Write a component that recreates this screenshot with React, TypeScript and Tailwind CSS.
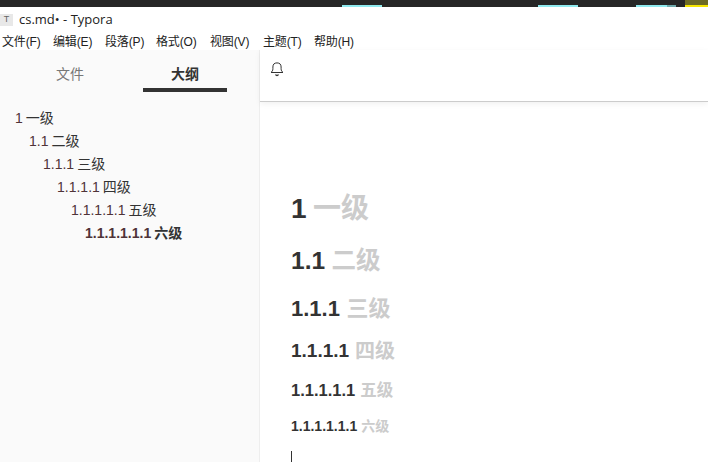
import React from "react";

const sans = "font-['Liberation_Sans','Noto_Sans_CJK_SC',sans-serif]";

const menus = [
  { label: "文件(F)", cls: "w-[51px]" },
  { label: "编辑(E)", cls: "w-[52px]" },
  { label: "段落(P)", cls: "w-[51px]" },
  { label: "格式(O)", cls: "w-[54px]" },
  { label: "视图(V)", cls: "w-[53px]" },
  { label: "主题(T)", cls: "w-[51px]" },
  { label: "帮助(H)", cls: "w-[60px]" },
];

const outline = [
  { num: "1", text: "一级", cls: "pl-[15px]" },
  { num: "1.1", text: "二级", cls: "pl-[29px]" },
  { num: "1.1.1", text: "三级", cls: "pl-[43px]" },
  { num: "1.1.1.1", text: "四级", cls: "pl-[57px]" },
  { num: "1.1.1.1.1", text: "五级", cls: "pl-[71px]" },
  { num: "1.1.1.1.1.1", text: "六级", cls: "pl-[85px] font-bold" },
];

const headings = [
  { num: "1", text: "一级", cls: "h-[52px] gap-[6.5px] text-[28px]", numCls: "" },
  { num: "1.1", text: "二级", cls: "h-[52px] gap-[6.5px] text-[24.5px]", numCls: "" },
  { num: "1.1.1", text: "三级", cls: "h-[42px] gap-[6.5px] text-[22px]", numCls: "" },
  { num: "1.1.1.1", text: "四级", cls: "h-[44px] gap-[6px] text-[20px]", numCls: "text-[19px]" },
  { num: "1.1.1.1.1", text: "五级", cls: "h-[34px] gap-[5px] text-[16.5px]", numCls: "" },
  { num: "1.1.1.1.1.1", text: "六级", cls: "h-[38px] gap-[4px] text-[14px]", numCls: "" },
];

function TopStrip() {
  return (
    <div className="flex h-[7px] bg-[#262626]">
      <div className="ml-[342px] mt-[5px] h-[2px] w-[40px] bg-[#8fe9ee]" />
      <div className="ml-[156px] mt-[5px] h-[2px] w-[40px] bg-[#8fe9ee]" />
      <div className="ml-[58px] mt-[5px] h-[2px] w-[31px] bg-[#8fe9ee]" />
      <div className="mt-[5px] h-[2px] w-[9px] bg-[#6fa9ac]" />
      <div className="ml-[9px] flex w-[23px] flex-col">
        <div className="h-[5px] bg-[#6d6a26]" />
        <div className="h-[2px] bg-[#f7e600]" />
      </div>
    </div>
  );
}

function Bell() {
  return (
    <svg width="14" height="16" viewBox="0 0 14 16" fill="none" stroke="#333" strokeWidth="1">
      <path d="M1 11.500h12c-1.200-1-1.900-2-1.900-3.800V6a4.100 4.100 0 0 0-8.200 0v1.700c0 1.800-.7 2.800-1.900 3.800z" />
      <path d="M5.500 13.500c.4.700.9 1 1.500 1s1.100-.3 1.500-1" strokeWidth="1.400" />
    </svg>
  );
}

export default function App() {
  return (
    <div className={`flex h-[462px] w-[708px] flex-col overflow-hidden bg-white ${sans}`}>
      <TopStrip />
      <div className="flex h-[26px] items-center">
        <div className="flex h-[12px] w-[13px] items-center justify-center bg-[#e8e8e8] text-[9px] text-[#666]">T</div>
        <span className="ml-[6px] font-['Open_Sans','Noto_Sans_CJK_SC',sans-serif] text-[13px] text-[#222]">cs.md• - Typora</span>
      </div>
      <div className="flex h-[17px] items-center pl-[2px] text-[12px] tracking-[-0.15px] text-[#222]">
        {menus.map((m) => (
          <span key={m.label} className={`shrink-0 whitespace-nowrap ${m.cls}`}>{m.label}</span>
        ))}
      </div>
      <div className="flex min-h-0 flex-1">
        <aside className="w-[260px] shrink-0 border-r border-[#eeeeee] bg-[#fafafa]">
          <div className="flex h-[42px] text-[14px]">
            <div className="flex w-[140px] items-start justify-center pt-[14px] text-[#777]">文件</div>
            <div className="ml-[3px] flex w-[84px] flex-col items-center justify-between pt-[14px] font-bold text-[#333]">
              <span>大纲</span>
              <div className="h-[4px] w-full bg-[#333]" />
            </div>
          </div>
          <ul className="pt-[15px] text-[14px] text-[#333]">
            {outline.map((o) => (
              <li key={o.num} className={`flex h-[23px] items-center gap-[3px] ${o.cls}`}>
                <span className="text-[#4f3338]">{o.num}</span>
                <span>{o.text}</span>
              </li>
            ))}
          </ul>
        </aside>
        <main className="flex min-w-0 flex-1 flex-col">
          <div className="flex h-[52px] shrink-0 items-start border-b border-[#cccccc] pl-[10px] pt-[11px] shadow-[0_2px_6px_rgba(0,0,0,0.06)]">
            <Bell />
          </div>
          <div className="flex flex-col pl-[31px] pt-[81px] font-bold text-[#333]">
            {headings.map((h) => (
              <div key={h.num} className={`flex items-center whitespace-nowrap ${h.cls}`}>
                <span className={h.numCls}>{h.num}</span>
                <span className="text-[#cccccc]">{h.text}</span>
              </div>
            ))}
            <div className="mt-[6px] h-[11px] w-px bg-[#333]" />
          </div>
        </main>
      </div>
    </div>
  );
}
